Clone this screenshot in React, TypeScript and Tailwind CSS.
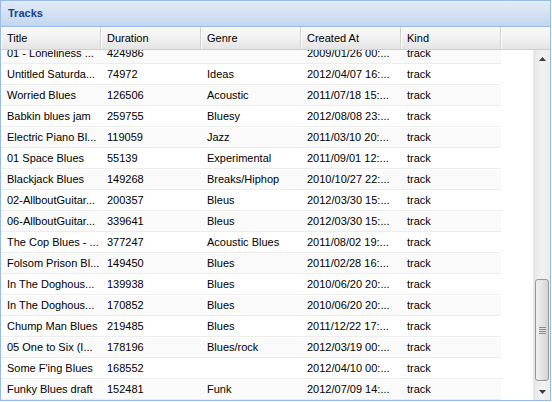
const COLUMNS = ["Title", "Duration", "Genre", "Created At", "Kind"];

// rows as shown (ellipsis baked in, the grid clips these at 100px)
const TRACKS = [
  ["01 - Loneliness ...", "424986", "", "2009/01/26 00:...", "track"],
  ["Untitled Saturda...", "74972", "Ideas", "2012/04/07 16:...", "track"],
  ["Worried Blues", "126506", "Acoustic", "2011/07/18 15:...", "track"],
  ["Babkin blues jam", "259755", "Bluesy", "2012/08/08 23:...", "track"],
  ["Electric Piano Bl...", "119059", "Jazz", "2011/03/10 20:...", "track"],
  ["01 Space Blues", "55139", "Experimental", "2011/09/01 12:...", "track"],
  ["Blackjack Blues", "149268", "Breaks/Hiphop", "2010/10/27 22:...", "track"],
  ["02-AllboutGuitar...", "200357", "Bleus", "2012/03/30 15:...", "track"],
  ["06-AllboutGuitar...", "339641", "Bleus", "2012/03/30 15:...", "track"],
  ["The Cop Blues - ...", "377247", "Acoustic Blues", "2011/08/02 19:...", "track"],
  ["Folsom Prison Bl...", "149450", "Blues", "2011/02/28 16:...", "track"],
  ["In The Doghous...", "139938", "Blues", "2010/06/20 20:...", "track"],
  ["In The Doghous...", "170852", "Blues", "2010/06/20 20:...", "track"],
  ["Chump Man Blues", "219485", "Blues", "2011/12/22 17:...", "track"],
  ["05 One to Six (I...", "178196", "Blues/rock", "2012/03/19 00:...", "track"],
  ["Some F'ing Blues", "168552", "", "2012/04/10 00:...", "track"],
  ["Funky Blues draft", "152481", "Funk", "2012/07/09 14:...", "track"],
];

const Arrow = ({ up }: { up?: boolean }) => (
  <div className="h-[17px] flex items-center justify-center">
    <svg width="7" height="4" viewBox="0 0 7 4">
      <path d={up ? "M0 4 L3.5 0 L7 4 Z" : "M0 0 L3.5 4 L7 0 Z"} fill="#3c3c3c" />
    </svg>
  </div>
);

const Scrollbar = () => (
  <div className="w-[17px] flex flex-col bg-gradient-to-r from-[#e6e6e6] via-[#f2f2f2] to-[#ececec] border-l border-[#e8e8e8]">
    <Arrow up />
    <div className="flex-1 flex flex-col px-[1px]">
      <div className="h-[212px]" />
      <div className="h-[102px] rounded-[3px] border border-[#979797] bg-gradient-to-r from-[#f0f0f0] via-[#e4e4e4] to-[#d4d4d4] flex flex-col items-center justify-center gap-[1px]">
        <div className="w-[7px] h-px bg-[#8a8a8a]" />
        <div className="w-[7px] h-px bg-[#8a8a8a]" />
        <div className="w-[7px] h-px bg-[#8a8a8a]" />
        <div className="w-[7px] h-px bg-[#8a8a8a]" />
      </div>
    </div>
    <Arrow />
  </div>
);

export default function App() {
  return (
    <div className="w-[552px] h-[402px] bg-white font-['Liberation_Sans',Arial,sans-serif] text-[11px] text-black">
      <div className="w-[551px] h-[401px] border border-[#99bbe8] flex flex-col">
        {/* panel title */}
        <div className="h-[26px] shrink-0 border-b border-[#99bbe8] bg-gradient-to-b from-[#e2ebf8] via-[#d3e1f4] to-[#c3d6f0] flex items-center px-[7px]">
          <span className="font-bold text-[11px] text-[#15428b]">Tracks</span>
        </div>

        {/* column headers */}
        <div className="h-[23px] shrink-0 flex border-b border-[#d0d0d0] bg-gradient-to-b from-[#fafafa] via-[#f1f1f1] to-[#e4e4e4]">
          {COLUMNS.map((c) => (
            <div key={c} className="w-[100px] shrink-0 border-l border-white border-r border-r-[#d0d0d0] flex items-center pl-[5px]">
              {c}
            </div>
          ))}
          <div className="flex-1 border-l border-white" />
        </div>

        {/* body */}
        <div className="flex-1 flex min-h-0">
          <div className="flex-1 overflow-hidden">
            <div className="-mt-[7px]">
              {TRACKS.map((t, i) => (
                <div
                  key={i}
                  className={`w-[500px] h-[21px] flex border-t border-white border-b border-b-[#ededed] ${i % 2 === 0 ? "bg-[#fafafa]" : "bg-white"}`}
                >
                  {t.map((cell, j) => (
                    <div key={j} className="w-[100px] shrink-0 flex items-center pl-[6px] pr-[3px] whitespace-nowrap overflow-hidden">
                      {cell}
                    </div>
                  ))}
                </div>
              ))}
            </div>
          </div>
          <Scrollbar />
        </div>
      </div>
    </div>
  );
}
